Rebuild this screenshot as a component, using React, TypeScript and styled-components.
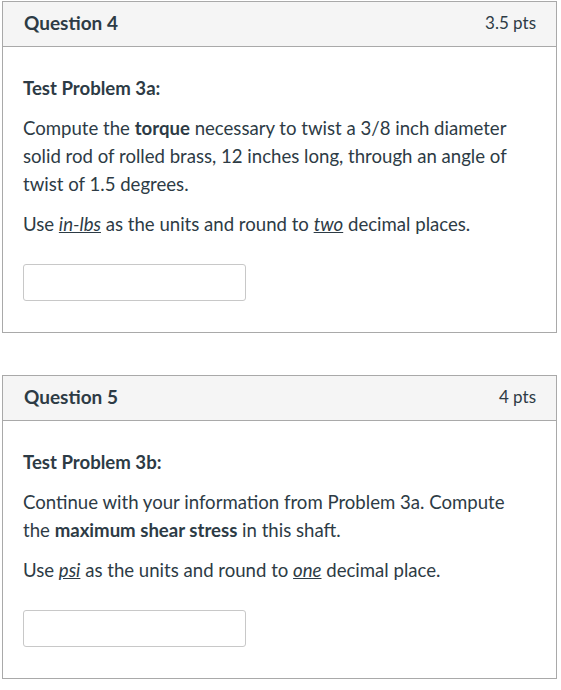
import styled, { createGlobalStyle } from "styled-components";

const GlobalStyle = createGlobalStyle`
  html, body {
    margin: 0;
    padding: 0;
    background: #ffffff;
  }
  body {
    font-family: Lato, "Noto Sans", sans-serif;
    color: #2d3b45;
  }
`;

const Page = styled.div`
  display: flex;
  flex-direction: column;
  gap: 42px;
  padding: 1px 0 0 2px;
`;

const Card = styled.div`
  width: 555px;
  box-sizing: border-box;
  border: 1px solid #a9a9a9;
  background: #ffffff;
`;

const Header = styled.div`
  height: 45px;
  box-sizing: border-box;
  display: flex;
  align-items: center;
  justify-content: space-between;
  padding: 0 20px 3px 21px;
  background: #f5f5f5;
  border-bottom: 1px solid #a9a9a9;
`;

const Title = styled.h2`
  margin: 0;
  font-size: 19px;
  font-weight: 700;
  color: #2d3b45;
`;

const Points = styled.span`
  font-size: 17px;
  font-weight: 400;
  color: #2d3b45;
`;

const Body = styled.div`
  padding: 27px 20px 31px 20px;
`;

const Para = styled.p<{ $bold?: boolean }>`
  margin: 0 0 12px;
  font-size: 18.6px;
  line-height: 28px;
  font-weight: ${(p) => (p.$bold ? 700 : 400)};
`;

const Unit = styled.em`
  text-decoration: underline;
`;

const Answer = styled.input`
  display: block;
  margin-top: 26px;
  width: 223px;
  height: 37px;
  box-sizing: border-box;
  border: 1px solid #c8c8c8;
  border-radius: 3px;
  background: #fff;
  padding: 0 8px;
  font-family: inherit;
  font-size: 16px;
  outline: none;
`;

const questions = [
  {
    title: "Question 4",
    pts: "3.5 pts",
    heading: "Test Problem 3a:",
    text: (
      <>
        Compute the <strong>torque</strong> necessary to twist a 3/8 inch diameter solid rod of rolled brass, 12 inches long, through an angle of twist of 1.5 degrees.
      </>
    ),
    units: (
      <>
        Use <Unit>in-lbs</Unit> as the units and round to <Unit>two</Unit> decimal places.
      </>
    ),
  },
  {
    title: "Question 5",
    pts: "4 pts",
    heading: "Test Problem 3b:",
    text: (
      <>
        Continue with your information from Problem 3a. Compute the <strong>maximum shear stress</strong> in this shaft.
      </>
    ),
    units: (
      <>
        Use <Unit>psi</Unit> as the units and round to <Unit>one</Unit> decimal place.
      </>
    ),
  },
];

export default function App() {
  return (
    <>
      <GlobalStyle />
      <Page>
        {questions.map((q, i) => (
          <Card key={i}>
            <Header>
              <Title>{q.title}</Title>
              <Points>{q.pts}</Points>
            </Header>
            <Body>
              <Para $bold>{q.heading}</Para>
              <Para>{q.text}</Para>
              <Para>{q.units}</Para>
              <Answer type="text" aria-label={q.title} />
            </Body>
          </Card>
        ))}
      </Page>
    </>
  );
}
